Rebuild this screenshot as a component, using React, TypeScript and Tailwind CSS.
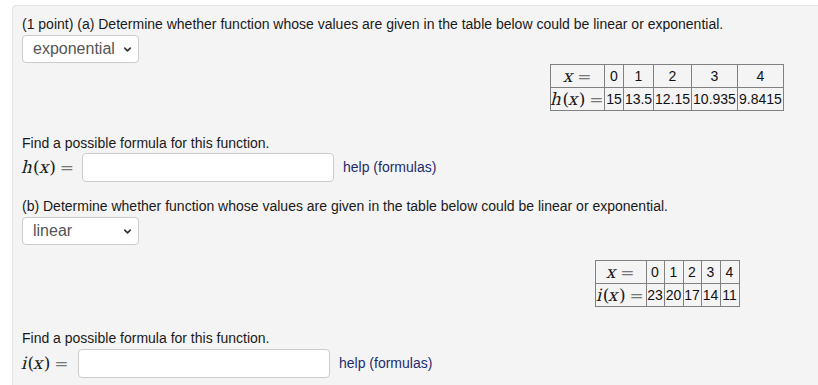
import { ChevronDown } from "lucide-react";

const sans = "font-['Liberation_Sans',Arial,sans-serif]";
const serif = "font-['DejaVu_Serif','Liberation_Serif',serif]";

// math letters are slanted by hand: the installed serif faces render upright here
function Var({ ch }: { ch: string }) {
  return <span className="inline-block -skew-x-[14deg]">{ch}</span>;
}

function MathFn({ name }: { name: string }) {
  return (
    <span className={`${serif} text-[17px] text-[#1a1a1a] whitespace-nowrap`}>
      <Var ch={name} />
      <span>(</span>
      <Var ch="x" />
      <span>)</span>
      <span className="ml-[4px] text-[#777]">=</span>
    </span>
  );
}

function FakeSelect({ value }: { value: string }) {
  return (
    <div className="mt-[2px] flex h-[28px] w-[117px] items-center justify-between rounded-[4px] border border-[#cccccc] bg-white pl-[10px] pr-[5px]">
      <span className="text-[16px] text-[#555]">{value}</span>
      <ChevronDown size={11} strokeWidth={3.5} className="text-[#333]" />
    </div>
  );
}

function ValueTable({ fn, xs, ys, widths }: { fn: string; xs: string[]; ys: string[]; widths: number[] }) {
  const cell = "border border-[#808080] h-[23px] p-0 text-center text-[14px] leading-none text-[#111]";
  return (
    <table className="border-collapse">
      <tbody>
        <tr>
          <td className={cell} style={{ width: widths[0] }}>
            <span className={`${serif} text-[17px] text-[#1a1a1a]`}>
              <Var ch="x" />
            </span>
            <span className={`${serif} ml-[4px] text-[17px] text-[#777]`}>=</span>
          </td>
          {xs.map((x, i) => (
            <td key={i} className={cell} style={{ width: widths[i + 1] }}>{x}</td>
          ))}
        </tr>
        <tr>
          <td className={cell}>
            <MathFn name={fn} />
          </td>
          {ys.map((y, i) => (
            <td key={i} className={cell}>{y}</td>
          ))}
        </tr>
      </tbody>
    </table>
  );
}

function FormulaRow({ fn, inputWidth, gap }: { fn: string; inputWidth: number; gap: string }) {
  return (
    <div className="flex h-[29px] items-center">
      <div className={gap}>
        <MathFn name={fn} />
      </div>
      <div className="h-[29px] rounded-[4px] border border-[#cccccc] bg-white" style={{ width: inputWidth }} />
      <a className="ml-[9px] text-[14px] text-[#1f2b6e]">help (formulas)</a>
    </div>
  );
}

export default function App() {
  return (
    <div className={`${sans} h-[385px] w-[818px] overflow-hidden bg-white`}>
      <div className="ml-[12px] mt-[5px] w-[820px] rounded-tl-[4px] border border-[#e3e3e3] bg-[#f4f4f4] pb-[8px] pl-[9px] pt-[9px] text-[14px] text-[#1a1a1a]">
        <p className="leading-[18px]">
          (1 point) (a) Determine whether function whose values are given in the table below could be linear or exponential.
        </p>
        <FakeSelect value="exponential" />
        <div className="ml-[494px] mt-[1px] flex w-[302px] justify-center">
          <ValueTable
            fn="h"
            xs={["0", "1", "2", "3", "4"]}
            ys={["15", "13.5", "12.15", "10.935", "9.8415"]}
            widths={[54, 19, 30, 38, 46, 46]}
          />
        </div>

        <p className="mt-[23px] leading-[18px]">Find a possible formula for this function.</p>
        <div className="mt-[1px]">
          <FormulaRow fn="h" inputWidth={252} gap="w-[60px]" />
        </div>

        <p className="mt-[15px] leading-[18px]">
          (b) Determine whether function whose values are given in the table below could be linear or exponential.
        </p>
        <FakeSelect value="linear" />
        <div className="ml-[494px] mt-[15px] flex w-[302px] justify-center">
          <ValueTable
            fn="i"
            xs={["0", "1", "2", "3", "4"]}
            ys={["23", "20", "17", "14", "11"]}
            widths={[51, 18, 19, 18, 19, 19]}
          />
        </div>

        <p className="mt-[22px] leading-[18px]">Find a possible formula for this function.</p>
        <div className="mt-[2px]">
          <FormulaRow fn="i" inputWidth={252} gap="w-[56px]" />
        </div>
      </div>
    </div>
  );
}
